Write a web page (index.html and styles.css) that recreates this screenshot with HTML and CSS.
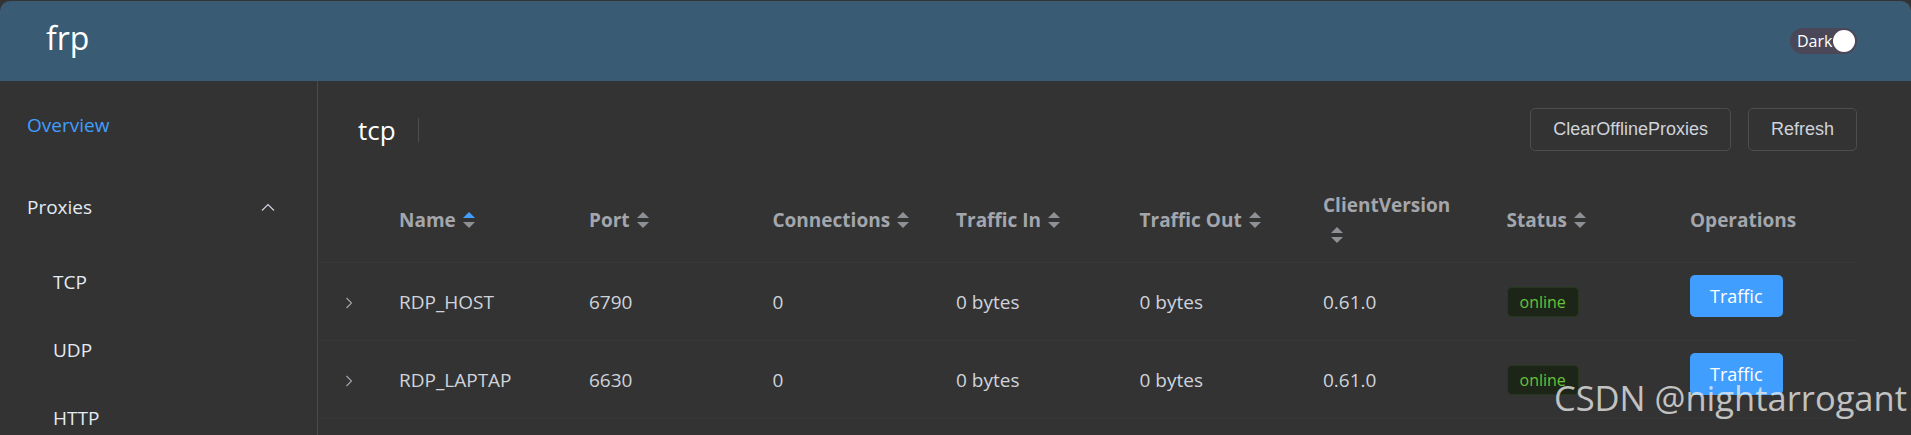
FILE: index.html
```html
<!DOCTYPE html>
<html lang="en">
<head>
    <meta charset="UTF-8">
    <meta name="viewport" content="width=device-width, initial-scale=1.0">
    <title>frp</title>
    <link rel="stylesheet" href="styles.css">
</head>
<body>

<div class="app">
    <header class="topbar">
        <span class="brand">frp</span>
        <div class="switch">
            <span class="switch-text">Dark</span>
            <span class="switch-dot"></span>
        </div>
    </header>

    <div class="layout">
        <aside class="sidebar">
            <ul class="menu">
                <li class="menu-item active">Overview</li>
                <li class="menu-item submenu-title">
                    <span>Proxies</span>
                    <svg class="chevron" width="14" height="8" viewBox="0 0 14 8"><path d="M1 7.5 L7 1.5 L13 7.5" fill="none" stroke="#cfd3dc" stroke-width="1.2"/></svg>
                </li>
                <li class="sub-item">TCP</li>
                <li class="sub-item">UDP</li>
                <li class="sub-item">HTTP</li>
            </ul>
        </aside>

        <main class="main">
            <div class="page-head">
                <div class="page-title">
                    <span>tcp</span>
                    <span class="divider"></span>
                </div>
                <div class="actions">
                    <button class="btn">ClearOfflineProxies</button>
                    <button class="btn">Refresh</button>
                </div>
            </div>

            <table class="proxy-table">
                <colgroup>
                    <col class="col-expand">
                    <col class="col-name">
                    <col class="col-std">
                    <col class="col-std">
                    <col class="col-std">
                    <col class="col-std">
                    <col class="col-std">
                    <col class="col-std">
                    <col class="col-last">
                </colgroup>
                <thead>
                    <tr>
                        <th></th>
                        <th>Name <svg class="sort" width="12" height="16" viewBox="0 0 12 16"><polygon points="0,6 6,0 12,6" fill="#409eff"/><polygon points="0,10 12,10 6,16" fill="#8d9095"/></svg></th>
                        <th>Port <svg class="sort" width="12" height="16" viewBox="0 0 12 16"><polygon points="0,6 6,0 12,6" fill="#8d9095"/><polygon points="0,10 12,10 6,16" fill="#8d9095"/></svg></th>
                        <th>Connections <svg class="sort" width="12" height="16" viewBox="0 0 12 16"><polygon points="0,6 6,0 12,6" fill="#8d9095"/><polygon points="0,10 12,10 6,16" fill="#8d9095"/></svg></th>
                        <th>Traffic In <svg class="sort" width="12" height="16" viewBox="0 0 12 16"><polygon points="0,6 6,0 12,6" fill="#8d9095"/><polygon points="0,10 12,10 6,16" fill="#8d9095"/></svg></th>
                        <th>Traffic Out <svg class="sort" width="12" height="16" viewBox="0 0 12 16"><polygon points="0,6 6,0 12,6" fill="#8d9095"/><polygon points="0,10 12,10 6,16" fill="#8d9095"/></svg></th>
                        <th class="th-wrap">ClientVersion<br><svg class="sort sort-below" width="12" height="16" viewBox="0 0 12 16"><polygon points="0,6 6,0 12,6" fill="#8d9095"/><polygon points="0,10 12,10 6,16" fill="#8d9095"/></svg></th>
                        <th>Status <svg class="sort" width="12" height="16" viewBox="0 0 12 16"><polygon points="0,6 6,0 12,6" fill="#8d9095"/><polygon points="0,10 12,10 6,16" fill="#8d9095"/></svg></th>
                        <th>Operations</th>
                    </tr>
                </thead>
                <tbody>
                    <tr>
                        <td class="expand"><svg width="8" height="12" viewBox="0 0 8 12"><path d="M1.5 1 L6.5 6 L1.5 11" fill="none" stroke="#a3a6ad" stroke-width="1.1"/></svg></td>
                        <td>RDP_HOST</td>
                        <td>6790</td>
                        <td>0</td>
                        <td>0 bytes</td>
                        <td>0 bytes</td>
                        <td>0.61.0</td>
                        <td><span class="tag">online</span></td>
                        <td><div class="op"><button class="btn-primary">Traffic</button></div></td>
                    </tr>
                    <tr>
                        <td class="expand"><svg width="8" height="12" viewBox="0 0 8 12"><path d="M1.5 1 L6.5 6 L1.5 11" fill="none" stroke="#a3a6ad" stroke-width="1.1"/></svg></td>
                        <td>RDP_LAPTAP</td>
                        <td>6630</td>
                        <td>0</td>
                        <td>0 bytes</td>
                        <td>0 bytes</td>
                        <td>0.61.0</td>
                        <td><span class="tag">online</span></td>
                        <td><div class="op"><button class="btn-primary">Traffic</button></div></td>
                    </tr>
                </tbody>
            </table>
        </main>
    </div>

    <div class="watermark">CSDN @nightarrogant</div>
</div>

</body>
</html>
```

FILE: styles.css
```css
body { margin: 0; background-color: #333333; font-family: "Open Sans", "Noto Sans", sans-serif; color: #cfd3dc; height: 435px; overflow: hidden; }
.app { position: relative; padding-top: 1px; height: 434px; overflow: hidden; }

/* header */
.topbar { height: 80px; background-color: #3a5b74; border-radius: 10px 10px 0 0; display: flex; align-items: center; justify-content: space-between; padding: 0 54px 0 46px; }
.brand { font-size: 32px; color: #ffffff; line-height: 1; margin-bottom: 6px; }
.switch { width: 67px; height: 26px; box-sizing: border-box; border-radius: 13px; background-color: #494758; display: flex; align-items: center; justify-content: space-between; padding: 0 2px 0 7px; }
.switch-text { font-size: 16px; color: #ffffff; line-height: 1; }
.switch-dot { width: 22px; height: 22px; border-radius: 50%; background-color: #ffffff; }

/* layout */
.layout { display: flex; height: 354px; }
.sidebar { width: 317px; flex: none; border-right: 1px solid #4a4b4d; }
.menu { list-style: none; margin: 0; padding: 3px 0 0; }
.menu-item { height: 82px; display: flex; align-items: center; padding-left: 27px; font-size: 19px; color: #e5eaf3; }
.menu-item.active { color: #409eff; }
.submenu-title { justify-content: space-between; padding-right: 42px; }
.chevron { display: block; }
.sub-item { height: 68px; display: flex; align-items: center; padding-left: 53px; font-size: 19px; color: #e5eaf3; }

.main { flex: 1; min-width: 0; padding: 27px 54px 0 0; }
.page-head { display: flex; justify-content: space-between; align-items: center; height: 43px; }
.page-title { display: flex; align-items: center; padding-left: 40px; font-size: 26px; color: #ffffff; }
.divider { width: 1px; height: 24px; background-color: #4c4d4f; margin-left: 22px; }
.actions { display: flex; gap: 17px; }
.btn { height: 43px; padding: 0 22px; border: 1px solid #4c4d4f; border-radius: 5px; background-color: transparent; color: #cfd3dc; font-family: "Liberation Sans", Arial, sans-serif; font-size: 18px; cursor: pointer; }

/* table */
.proxy-table { margin-top: 26px; width: 1539px; table-layout: fixed; border-collapse: collapse; }
.col-expand { width: 65px; }
.col-name { width: 190px; }
.col-std { width: 183.5px; }
.col-last { width: 183px; }
.proxy-table th { height: 85px; padding: 0 16px; text-align: left; font-weight: 700; font-size: 19px; color: #a3a6ad; line-height: 30px; vertical-align: middle; border-bottom: 1px solid #373737; white-space: nowrap; }
.proxy-table td { height: 77px; padding: 0 16px; font-size: 19px; color: #cfd3dc; vertical-align: middle; border-bottom: 1px solid #373737; white-space: nowrap; }
.proxy-table td.expand { padding: 0; text-align: center; }
.expand svg { display: inline-block; vertical-align: middle; margin-right: 4px; }
.sort { vertical-align: middle; margin-left: 2px; margin-top: -3px; }
.sort-below { margin-left: 8px; }

.tag { display: inline-flex; align-items: center; height: 30px; box-sizing: border-box; padding: 0 12px; border: 1px solid #25371c; border-radius: 5px; background-color: #1c2518; color: #67c23a; font-size: 16px; }
.op { padding-bottom: 12px; }
.btn-primary { height: 42px; padding: 0 20px; border: none; border-radius: 5px; background-color: #409eff; color: #ffffff; font-family: "Open Sans", sans-serif; font-size: 18px; cursor: pointer; }

.watermark { position: absolute; right: 4px; top: 381px; font-size: 34.5px; line-height: 1; color: rgba(235, 235, 235, 0.78); }
```
